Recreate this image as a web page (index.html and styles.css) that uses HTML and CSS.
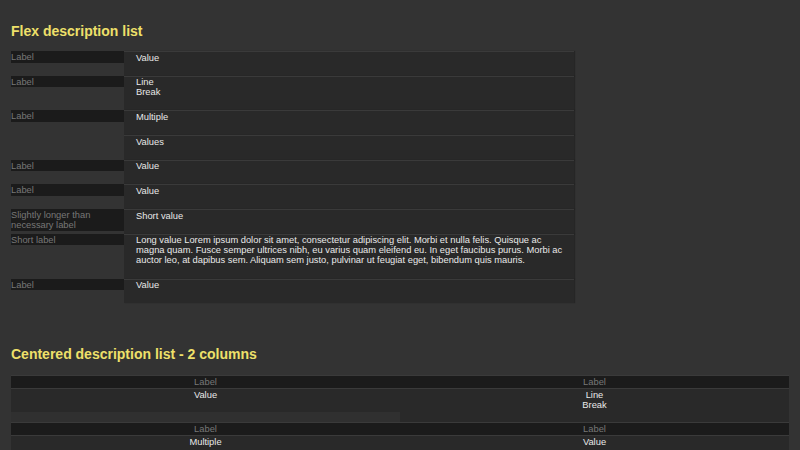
FILE: index.html
```html
<!DOCTYPE html>
<html>
<head>
<meta charset="utf-8">
<link rel="stylesheet" href="styles.css">
</head>
<body>
<h2 class="title first">Flex description list</h2>
<dl class="flex-list">
  <dt>Label</dt><dd>Value</dd>
  <dt>Label</dt><dd>Line<br>Break</dd>
  <dt>Label</dt><dd>Multiple</dd><dd>Values</dd>
  <dt>Label</dt><dd>Value</dd>
  <dt>Label</dt><dd>Value</dd>
  <dt>Slightly longer than necessary label</dt><dd>Short value</dd>
  <dt>Short label</dt><dd>Long value Lorem ipsum dolor sit amet, consectetur adipiscing elit. Morbi et nulla felis. Quisque ac magna quam. Fusce semper ultrices nibh, eu varius quam eleifend eu. In eget faucibus purus. Morbi ac auctor leo, at dapibus sem. Aliquam sem justo, pulvinar ut feugiat eget, bibendum quis mauris.</dd>
  <dt>Label</dt><dd>Value</dd>
</dl>
<h2 class="title second">Centered description list - 2 columns</h2>
<dl class="grid-list">
  <div class="item"><dt>Label</dt><dd>Value</dd></div>
  <div class="item"><dt>Label</dt><dd>Line<br>Break</dd></div>
  <div class="item"><dt>Label</dt><dd>Multiple</dd></div>
  <div class="item"><dt>Label</dt><dd>Value</dd></div>
</dl>
</body>
</html>
```
FILE: styles.css
```css
html, body {
  margin: 0;
  background: #333333;
}
body {
  padding: 0 11px;
  font-family: "Liberation Sans", Arial, sans-serif;
  font-size: 9.33px;
  line-height: normal;
  color: #e6e6e6;
}
.title {
  font-size: 14px;
  line-height: 18px;
  font-weight: bold;
  color: #eee06a;
  margin: 0;
}
.title.first {
  padding-top: 22px;
  margin-bottom: 11px;
}
.title.second {
  margin-top: 42px;
  margin-bottom: 12px;
}
.flex-list {
  display: grid;
  grid-template-columns: 113px 450px;
  margin: 0;
}
.flex-list dt {
  grid-column: 1;
  align-self: start;
  background: #1b1b1b;
  color: #777777;
  padding: 1px 0 0.5px;
}
.flex-list dd {
  grid-column: 2;
  margin: 0;
  padding: 0.5px 6px 13.2px 12px;
  background: #292929;
  border-top: 1px solid #3a3a3a;
  box-shadow: 1px 0 1px rgba(0, 0, 0, 0.25);
  color: #e8e8e8;
}
.grid-list {
  display: grid;
  grid-template-columns: 1fr 1fr;
  margin: 0;
}
.grid-list .item {
  background: #303030;
  text-align: center;
}
.grid-list dt {
  background: #1b1b1b;
  color: #777777;
  border-top: 1px solid #3a3a3a;
  line-height: 12px;
}
.grid-list dd {
  margin: 0;
  padding: 1px 0 11.5px;
  background: #292929;
  border-top: 1px solid #3a3a3a;
  color: #e8e8e8;
}
```
